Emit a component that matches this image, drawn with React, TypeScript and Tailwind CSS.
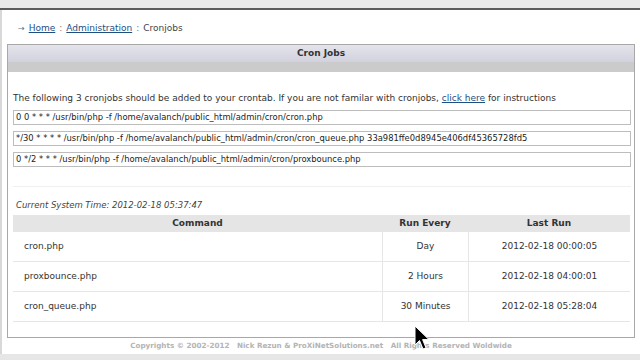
import React from "react";

const font = { fontFamily: '"DejaVu Sans", Verdana, sans-serif' };

export default function App() {
  const rows = [
    ["cron.php", "Day", "2012-02-18 00:00:05"],
    ["proxbounce.php", "2 Hours", "2012-02-18 04:00:01"],
    ["cron_queue.php", "30 Minutes", "2012-02-18 05:28:04"],
  ];
  const cmds = [
    "0 0 * * * /usr/bin/php -f /home/avalanch/public_html/admin/cron/cron.php",
    "*/30 * * * * /usr/bin/php -f /home/avalanch/public_html/admin/cron/cron_queue.php 33a981ffe0d8945e406df45365728fd5",
    "0 */2 * * * /usr/bin/php -f /home/avalanch/public_html/admin/cron/proxbounce.php",
  ];
  return (
    <div className="relative w-[640px] h-[360px] overflow-hidden bg-[#e6e6e6] text-[9px] text-[#333]" style={font}>
      <div className="h-[8px] bg-[#e8e8e8]" />
      <div className="h-[2px] bg-[#5a5a5a]" />
      <div className="h-[344px] bg-white border-l-2 border-[#d8d8d8] flex flex-col">
        <div className="h-[34px] flex items-center pt-[3px] pl-[16px] gap-[4px] text-[#444]">
          <span className="text-[#5a6f8a] text-[8px]">&rarr;</span>
          <span className="text-[#1d4f82] underline">Home</span>
          <span className="text-[#777]">:</span>
          <span className="text-[#1d4f82] underline">Administration</span>
          <span className="text-[#777]">:</span>
          <span>Cronjobs</span>
        </div>
        <div className="ml-[5px] w-[628px] h-[294px] border border-[#a8a8a8] flex flex-col">
          <div className="h-[17px] bg-gradient-to-b from-[#e4e4ec] to-[#d2d2de] flex items-center justify-center font-bold text-[#333]">
            Cron Jobs
          </div>
          <div className="h-[10px] bg-[#cbcbcb]" />
          <div className="pl-[5px] pr-[3px] pt-[21px]">
            <div className="h-[11px] leading-[11px] text-[#333]">
              The following 3 cronjobs should be added to your crontab. If you are not familar with cronjobs,{" "}
              <span className="text-[#1d4f82] underline">click here</span> for instructions
            </div>
            <div className="mt-[6px] flex flex-col gap-[6px]">
              {cmds.map((c) => (
                <div key={c} className="h-[15px] border border-[#bdbdbd] flex items-center pl-[2px] text-[8.4px] text-[#222] whitespace-nowrap">
                  {c}
                </div>
              ))}
            </div>
            <div className="mt-[19px] border-t border-[#f0f0f0]" />
            <div className="pl-[3px] mt-[13px] h-[11px] leading-[11px] italic text-[8.5px] text-[#444]">
              Current System Time: 2012-02-18 05:37:47
            </div>
            <div className="mt-[4px] grid grid-cols-[369px_86px_162px]">
              <div className="h-[17px] bg-[#e5e5e5] flex items-center justify-center font-bold">Command</div>
              <div className="h-[17px] bg-[#e5e5e5] flex items-center justify-center font-bold">Run Every</div>
              <div className="h-[17px] bg-[#e5e5e5] flex items-center justify-center font-bold">Last Run</div>
              {rows.map((r) => (
                <React.Fragment key={r[0]}>
                  <div className="h-[30px] flex items-center pl-[11px] border-b border-[#e6e6e6]">{r[0]}</div>
                  <div className="h-[30px] flex items-center justify-center border-b border-l border-[#e6e6e6]">{r[1]}</div>
                  <div className="h-[30px] flex items-center justify-center border-b border-l border-[#e6e6e6]">{r[2]}</div>
                </React.Fragment>
              ))}
            </div>
          </div>
        </div>
        <div className="h-[16px] flex items-center justify-center text-[7.2px] text-[#b4b4b4] font-bold whitespace-pre">
          {"Copyrights \u00a9 2002-2012   Nick Rezun & ProXiNetSolutions.net   All Rights Reserved Woldwide"}
        </div>
      </div>
      <svg className="absolute left-[414px] top-[325px]" width="18" height="26" viewBox="0 0 18 26">
        <path d="M1 1 L1 20 L5.5 15.5 L9 24 L12 22.8 L8.6 14.6 L15 14.6 Z" fill="#000" stroke="#fff" strokeWidth="1" />
      </svg>
    </div>
  );
}
